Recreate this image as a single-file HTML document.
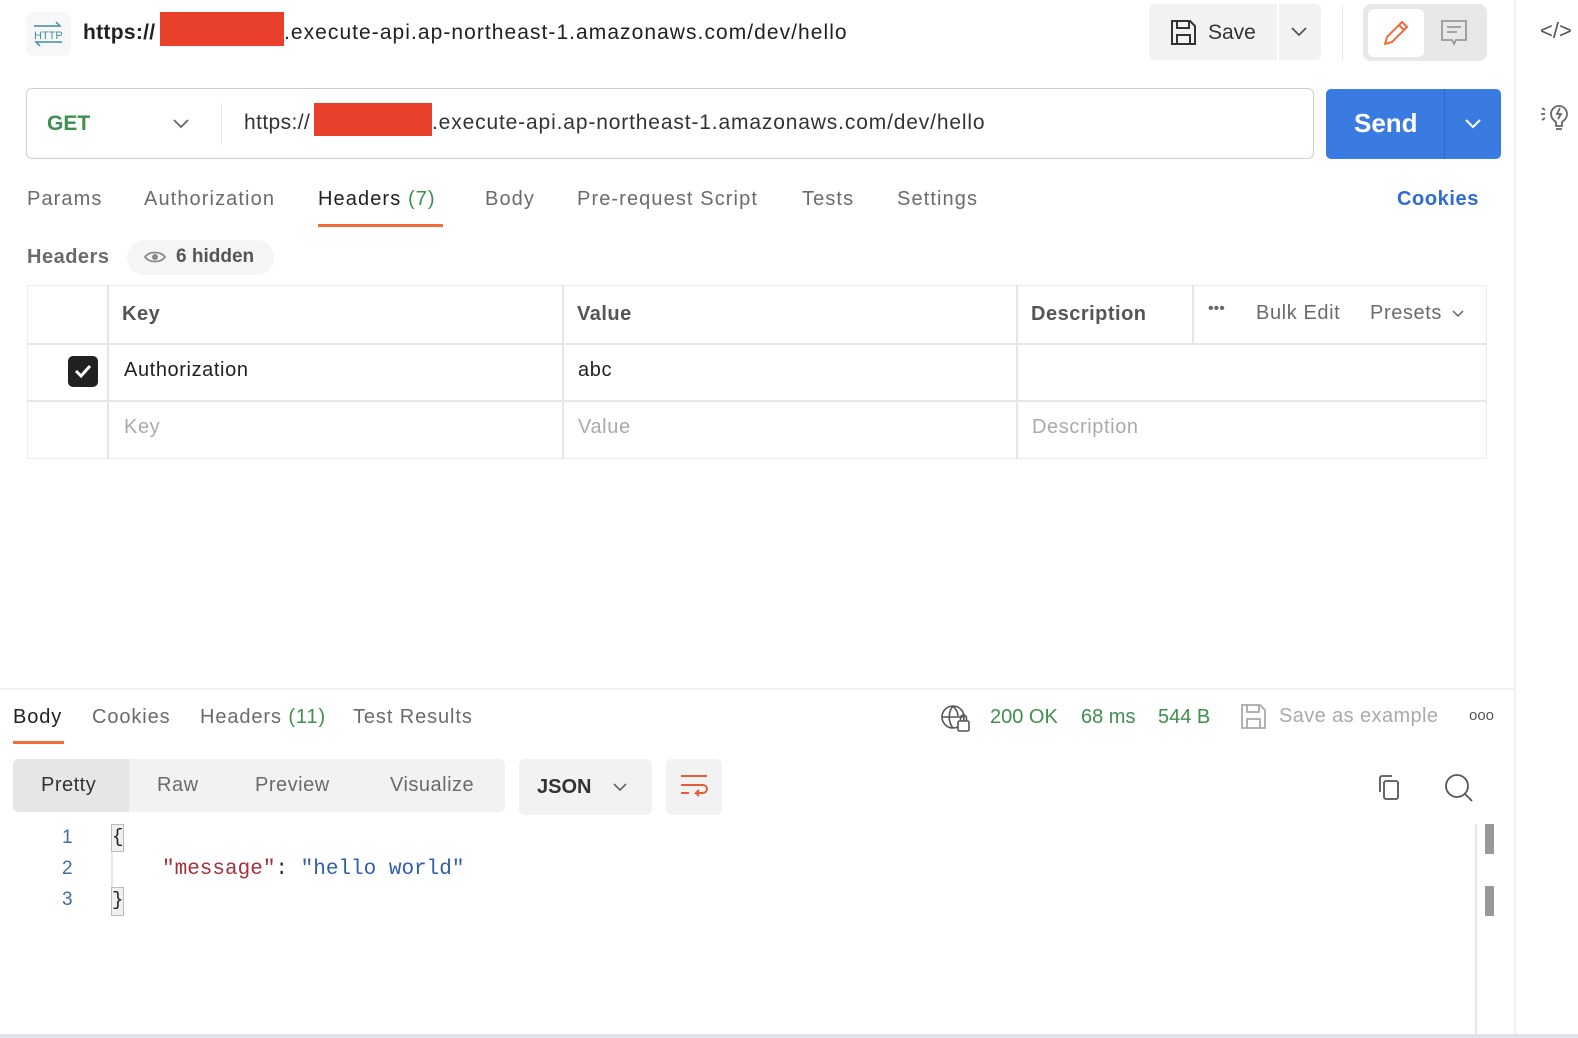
<!DOCTYPE html>
<html style="overflow:hidden;width:1578px;height:1038px"><head><meta charset="utf-8"><style>
*{margin:0;padding:0;box-sizing:border-box}
body{width:1578px;height:1038px;background:#fff;position:relative;overflow:hidden;font-family:"Liberation Sans",sans-serif;color:#212121}
.a{position:absolute;white-space:nowrap}
.tab{position:absolute;top:188px;font-size:20px;color:#6b6b6b;letter-spacing:1.1px}
.btab{position:absolute;top:706px;font-size:20px;color:#6b6b6b;letter-spacing:0.9px}
.line{position:absolute;background:#e6e6e6}
.g{color:#3f8f4f}
</style></head><body>
<div class="a" style="left:26px;top:12px;width:45px;height:44px;background:#f7f7f7;border-radius:8px"></div>
<svg class="a" style="left:31px;top:18px" width="34" height="32" viewBox="0 0 34 32"><path d="M3 8h26l-4-4M31 24H5l4 4" stroke="#3f8fa3" stroke-width="1.5" fill="none"/><text x="3" y="21" font-size="11" font-family="Liberation Sans" fill="#3f8fa3">HTTP</text></svg>
<div class="a" style="left:83px;top:21px;font-size:21px;font-weight:bold;color:#212121;letter-spacing:0.3px">https://</div>
<div class="a" style="left:160px;top:12px;width:124px;height:34px;background:#e8402a"></div>
<div class="a" style="left:284px;top:21px;font-size:21px;color:#212121;letter-spacing:1.05px">.execute-api.ap-northeast-1.amazonaws.com/dev/hello</div>

<div class="a" style="left:1149px;top:4px;width:128px;height:56px;background:#f2f2f2;border-radius:6px 0 0 6px"></div>
<div class="a" style="left:1279px;top:4px;width:42px;height:56px;background:#f2f2f2;border-radius:0 6px 6px 0"></div>
<svg class="a" style="left:1170px;top:19px" width="27" height="27" viewBox="0 0 27 27"><path d="M2 2h18l5 5v18H2z M7 2v7h12V2 M7 25v-9h13v9" stroke="#333" stroke-width="2" fill="none"/></svg>
<div class="a" style="left:1208px;top:21px;font-size:21px;color:#333">Save</div>
<svg class="a" style="left:1290px;top:26px" width="18" height="12"><path d="M2 2l7 7 7-7" stroke="#555" stroke-width="1.8" fill="none"/></svg>
<div class="line" style="left:1342px;top:6px;width:1px;height:54px"></div>
<div class="a" style="left:1363px;top:4px;width:124px;height:57px;background:#e8e8e8;border-radius:8px"></div>
<div class="a" style="left:1368px;top:9px;width:56px;height:48px;background:#fff;border-radius:6px"></div>
<svg class="a" style="left:1381px;top:18px" width="30" height="30" viewBox="0 0 30 30"><path d="M4 26l2-7 15-15 5 5-15 15z M18 7l5 5" stroke="#f26b3a" stroke-width="2" fill="none" stroke-linejoin="round"/></svg>
<svg class="a" style="left:1440px;top:19px" width="28" height="28" viewBox="0 0 28 28"><path d="M2 2h24v19H16l-2 4-2-4H2z M7 8h14M7 13h10" stroke="#999" stroke-width="1.8" fill="none"/></svg>
<div class="line" style="left:1514px;top:0;width:2px;height:1038px;background:#f0f0f0"></div>
<div class="a" style="left:1540px;top:18px;font-size:22px;color:#555">&lt;/&gt;</div>
<svg class="a" style="left:1540px;top:100px" width="38" height="34" viewBox="0 0 38 34"><path d="M16 22c-3-2-5-5-5-8a8 8 0 0116 0c0 3-2 6-5 8v4h-6z M16 29h6 M20 8l-3 6h4l-3 5 M2 8l3 2M1 14h4M2 20l3-2" stroke="#666" stroke-width="1.8" fill="none"/></svg>

<div class="a" style="left:26px;top:88px;width:1288px;height:71px;border:1.5px solid #cfcfcf;border-radius:6px"></div>
<div class="a" style="left:47px;top:112px;font-size:21px;font-weight:bold;color:#3f8f4f">GET</div>
<svg class="a" style="left:172px;top:118px" width="18" height="12"><path d="M2 2l7 7 7-7" stroke="#666" stroke-width="1.8" fill="none"/></svg>
<div class="line" style="left:221px;top:103px;width:1px;height:42px"></div>
<div class="a" style="left:244px;top:111px;font-size:21px;color:#333;letter-spacing:0.4px">https://</div>
<div class="a" style="left:314px;top:103px;width:118px;height:33px;background:#e8402a"></div>
<div class="a" style="left:432px;top:111px;font-size:21px;color:#333;letter-spacing:0.85px">.execute-api.ap-northeast-1.amazonaws.com/dev/hello</div>
<div class="a" style="left:1326px;top:89px;width:175px;height:70px;background:#3a7be2;border-radius:5px"></div>
<div class="line" style="left:1444px;top:89px;width:1px;height:70px;background:#2f68c2"></div>
<div class="a" style="left:1354px;top:108px;font-size:26px;font-weight:bold;color:#fff">Send</div>
<svg class="a" style="left:1464px;top:118px" width="18" height="12"><path d="M2 2l7 7 7-7" stroke="#fff" stroke-width="2" fill="none"/></svg>

<div class="tab" style="left:27px">Params</div>
<div class="tab" style="left:144px">Authorization</div>
<div class="tab" style="left:318px;color:#212121">Headers <span class="g">(7)</span></div>
<div class="a" style="left:318px;top:224px;width:125px;height:3px;background:#f26b3a"></div>
<div class="tab" style="left:485px">Body</div>
<div class="tab" style="left:577px">Pre-request Script</div>
<div class="tab" style="left:802px">Tests</div>
<div class="tab" style="left:897px">Settings</div>
<div class="a" style="left:1397px;top:188px;font-size:20px;font-weight:bold;color:#2d6bd6;letter-spacing:0.6px">Cookies</div>

<div class="a" style="left:27px;top:246px;font-size:20px;font-weight:bold;color:#6b6b6b;letter-spacing:0.5px">Headers</div>
<div class="a" style="left:127px;top:240px;width:147px;height:35px;background:#f5f5f5;border-radius:18px"></div>
<svg class="a" style="left:143px;top:249px" width="24" height="16" viewBox="0 0 24 16"><path d="M2 8c4-6 16-6 20 0c-4 6-16 6-20 0z" stroke="#888" stroke-width="1.8" fill="none"/><circle cx="12" cy="8" r="3" fill="#888"/></svg>
<div class="a" style="left:176px;top:246px;font-size:19px;font-weight:bold;color:#555">6 hidden</div>

<div class="a" style="left:27px;top:285px;width:1460px;height:174px;border:1.5px solid #ececec"></div>
<div class="line" style="left:27px;top:343px;width:1460px;height:1.5px"></div>
<div class="line" style="left:27px;top:400px;width:1460px;height:1.5px"></div>
<div class="line" style="left:107px;top:285px;width:1.5px;height:174px"></div>
<div class="line" style="left:562px;top:285px;width:1.5px;height:174px"></div>
<div class="line" style="left:1016px;top:285px;width:1.5px;height:174px"></div>
<div class="line" style="left:1192px;top:285px;width:1.5px;height:58px"></div>
<div class="a" style="left:122px;top:303px;font-size:20px;font-weight:bold;color:#555;letter-spacing:0.5px">Key</div>
<div class="a" style="left:577px;top:303px;font-size:20px;font-weight:bold;color:#555;letter-spacing:0.5px">Value</div>
<div class="a" style="left:1031px;top:303px;font-size:20px;font-weight:bold;color:#555;letter-spacing:0.5px">Description</div>
<div class="a" style="left:1208px;top:300px;font-size:16px;color:#666;letter-spacing:0px">•••</div>
<div class="a" style="left:1256px;top:302px;font-size:20px;color:#6b6b6b;letter-spacing:0.6px">Bulk Edit</div>
<div class="a" style="left:1370px;top:302px;font-size:20px;color:#6b6b6b;letter-spacing:0.6px">Presets</div>
<svg class="a" style="left:1452px;top:309px" width="12" height="9"><path d="M1 2l5 5 5-5" stroke="#666" stroke-width="1.5" fill="none"/></svg>
<div class="a" style="left:68px;top:356px;width:30px;height:31px;background:#212121;border-radius:5px"></div>
<svg class="a" style="left:71px;top:360px" width="24" height="22"><path d="M5 11l5 5 9-10" stroke="#fff" stroke-width="3" fill="none"/></svg>
<div class="a" style="left:124px;top:359px;font-size:20px;color:#212121;letter-spacing:0.6px">Authorization</div>
<div class="a" style="left:578px;top:359px;font-size:20px;color:#212121;letter-spacing:0.6px">abc</div>
<div class="a" style="left:124px;top:416px;font-size:20px;color:#aaa;letter-spacing:0.6px">Key</div>
<div class="a" style="left:578px;top:416px;font-size:20px;color:#aaa;letter-spacing:0.6px">Value</div>
<div class="a" style="left:1032px;top:416px;font-size:20px;color:#aaa;letter-spacing:0.6px">Description</div>

<div class="line" style="left:0;top:688px;width:1514px;height:2px;background:#f0f0f0"></div>
<div class="btab" style="left:13px;color:#212121">Body</div>
<div class="a" style="left:13px;top:741px;width:51px;height:3px;background:#f26b3a"></div>
<div class="btab" style="left:92px">Cookies</div>
<div class="btab" style="left:200px">Headers <span class="g">(11)</span></div>
<div class="btab" style="left:353px">Test Results</div>
<svg class="a" style="left:940px;top:703px" width="32" height="30" viewBox="0 0 32 30"><circle cx="13" cy="14" r="11" stroke="#555" stroke-width="1.6" fill="none"/><path d="M2 14h22M13 3c-5 6-5 16 0 22M13 3c4 4 5 8 5 10" stroke="#555" stroke-width="1.6" fill="none"/><rect x="18" y="18" width="11" height="10" rx="1.5" fill="#fff" stroke="#555" stroke-width="1.6"/><path d="M20.5 18v-3a3 3 0 016 0v3" stroke="#555" stroke-width="1.6" fill="none"/></svg>
<div class="a g" style="left:990px;top:706px;font-size:20px">200 OK</div>
<div class="a g" style="left:1081px;top:706px;font-size:20px">68 ms</div>
<div class="a g" style="left:1158px;top:706px;font-size:20px">544 B</div>
<svg class="a" style="left:1240px;top:703px" width="27" height="27" viewBox="0 0 27 27"><path d="M2 2h18l5 5v18H2z M7 2v7h12V2 M7 25v-9h13v9" stroke="#aaa" stroke-width="1.8" fill="none"/></svg>
<div class="a" style="left:1279px;top:705px;font-size:20px;color:#aaa;letter-spacing:0.4px">Save as example</div>
<div class="a" style="left:1469px;top:707px;font-size:15px;color:#555">ooo</div>

<div class="a" style="left:13px;top:759px;width:492px;height:53px;background:#f2f2f2;border-radius:6px"></div>
<div class="a" style="left:13px;top:759px;width:116px;height:53px;background:#e6e6e6;border-radius:6px 0 0 6px"></div>
<div class="a" style="left:41px;top:774px;font-size:20px;color:#333;letter-spacing:0.5px">Pretty</div>
<div class="a" style="left:157px;top:774px;font-size:20px;color:#6b6b6b;letter-spacing:0.5px">Raw</div>
<div class="a" style="left:255px;top:774px;font-size:20px;color:#6b6b6b;letter-spacing:0.5px">Preview</div>
<div class="a" style="left:390px;top:774px;font-size:20px;color:#6b6b6b;letter-spacing:0.5px">Visualize</div>
<div class="a" style="left:519px;top:759px;width:133px;height:56px;background:#f2f2f2;border-radius:6px"></div>
<div class="a" style="left:537px;top:776px;font-size:20px;font-weight:bold;color:#333">JSON</div>
<svg class="a" style="left:612px;top:782px" width="16" height="11"><path d="M2 2l6 6 6-6" stroke="#666" stroke-width="1.6" fill="none"/></svg>
<div class="a" style="left:666px;top:759px;width:56px;height:56px;background:#f2f2f2;border-radius:6px"></div>
<svg class="a" style="left:679px;top:772px" width="30" height="30" viewBox="0 0 30 30"><path d="M2 4h26M2 13h22a4 4 0 010 8h-7l3-3m-3 3l3 3M2 21h8" stroke="#e05f3a" stroke-width="2" fill="none"/></svg>
<svg class="a" style="left:1375px;top:773px" width="30" height="30" viewBox="0 0 30 30"><path d="M5 19V5a2 2 0 012-2h10" stroke="#555" stroke-width="1.8" fill="none"/><rect x="9" y="8" width="14" height="18" rx="2" stroke="#555" stroke-width="1.8" fill="none"/></svg>
<svg class="a" style="left:1443px;top:772px" width="32" height="32" viewBox="0 0 32 32"><circle cx="14" cy="14" r="11" stroke="#555" stroke-width="1.8" fill="none"/><path d="M22 22l7 7" stroke="#555" stroke-width="1.8"/></svg>

<div class="a" style="left:62px;top:827px;font-size:19px;color:#3f6f9f">1</div>
<div class="a" style="left:62px;top:858px;font-size:19px;color:#3f6f9f">2</div>
<div class="a" style="left:62px;top:889px;font-size:19px;color:#3f6f9f">3</div>
<div class="line" style="left:111px;top:824px;width:2px;height:92px;background:#e8e8e8"></div>
<div class="a" style="left:111px;top:824px;width:13px;height:28px;background:#eef2ee;border:1px solid #bbb"></div>
<div class="a" style="left:112px;top:826px;font-family:'Liberation Mono';font-size:19px">{</div>
<div class="a" style="left:111px;top:887px;width:13px;height:29px;background:#eef2ee;border:1px solid #bbb"></div>
<div class="a" style="left:112px;top:889px;font-family:'Liberation Mono';font-size:19px">}</div>
<div class="a" style="left:162px;top:858px;font-family:'Liberation Mono';font-size:21px;color:#a3303a">"message"<span style="color:#333">: </span><span style="color:#2e5fa8">"hello world"</span></div>

<div class="line" style="left:1475px;top:824px;width:2px;height:210px;background:#e6e6e6"></div>
<div class="a" style="left:1485px;top:824px;width:9px;height:30px;background:#999"></div>
<div class="a" style="left:1485px;top:886px;width:9px;height:30px;background:#999"></div>
<div class="a" style="left:0;top:1034px;width:1578px;height:4px;background:#dde3ea"></div>
</body></html>
